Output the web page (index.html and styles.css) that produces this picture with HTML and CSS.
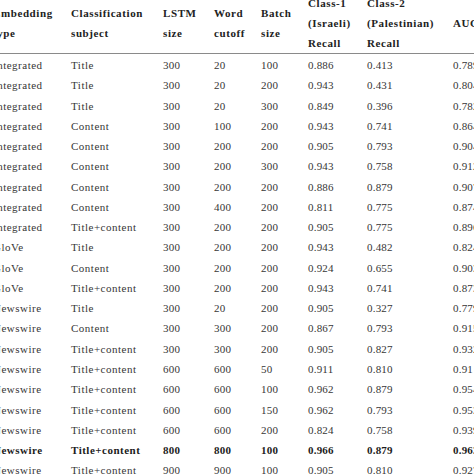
FILE: index.html
```html
<!DOCTYPE html>
<html>
<head>
<meta charset="utf-8">
<link rel="stylesheet" href="styles.css">
</head>
<body>
<div class="frame">
<table class="results">
<colgroup>
<col class="c-emb"><col class="c-subj"><col class="c-lstm"><col class="c-word"><col class="c-batch"><col class="c-r1"><col class="c-r2"><col class="c-auc">
</colgroup>
<thead>
<tr>
<th>Embedding<br>type</th>
<th>Classification<br>subject</th>
<th>LSTM<br>size</th>
<th>Word<br>cutoff</th>
<th>Batch<br>size</th>
<th>Class-1<br>(Israeli)<br>Recall</th>
<th>Class-2<br>(Palestinian)<br>Recall</th>
<th>AUC</th>
</tr>
</thead>
<tbody>
<tr><td>Integrated</td><td>Title</td><td class="n">300</td><td class="n">20</td><td class="n">100</td><td class="n">0.886</td><td class="n">0.413</td><td class="n">0.789</td></tr>
<tr><td>Integrated</td><td>Title</td><td class="n">300</td><td class="n">20</td><td class="n">200</td><td class="n">0.943</td><td class="n">0.431</td><td class="n">0.804</td></tr>
<tr><td>Integrated</td><td>Title</td><td class="n">300</td><td class="n">20</td><td class="n">300</td><td class="n">0.849</td><td class="n">0.396</td><td class="n">0.782</td></tr>
<tr><td>Integrated</td><td>Content</td><td class="n">300</td><td class="n">100</td><td class="n">200</td><td class="n">0.943</td><td class="n">0.741</td><td class="n">0.864</td></tr>
<tr><td>Integrated</td><td>Content</td><td class="n">300</td><td class="n">200</td><td class="n">200</td><td class="n">0.905</td><td class="n">0.793</td><td class="n">0.904</td></tr>
<tr><td>Integrated</td><td>Content</td><td class="n">300</td><td class="n">200</td><td class="n">300</td><td class="n">0.943</td><td class="n">0.758</td><td class="n">0.912</td></tr>
<tr><td>Integrated</td><td>Content</td><td class="n">300</td><td class="n">200</td><td class="n">200</td><td class="n">0.886</td><td class="n">0.879</td><td class="n">0.907</td></tr>
<tr><td>Integrated</td><td>Content</td><td class="n">300</td><td class="n">400</td><td class="n">200</td><td class="n">0.811</td><td class="n">0.775</td><td class="n">0.874</td></tr>
<tr><td>Integrated</td><td>Title+content</td><td class="n">300</td><td class="n">200</td><td class="n">200</td><td class="n">0.905</td><td class="n">0.775</td><td class="n">0.896</td></tr>
<tr><td>GloVe</td><td>Title</td><td class="n">300</td><td class="n">200</td><td class="n">200</td><td class="n">0.943</td><td class="n">0.482</td><td class="n">0.824</td></tr>
<tr><td>GloVe</td><td>Content</td><td class="n">300</td><td class="n">200</td><td class="n">200</td><td class="n">0.924</td><td class="n">0.655</td><td class="n">0.903</td></tr>
<tr><td>GloVe</td><td>Title+content</td><td class="n">300</td><td class="n">200</td><td class="n">200</td><td class="n">0.943</td><td class="n">0.741</td><td class="n">0.873</td></tr>
<tr><td>Newswire</td><td>Title</td><td class="n">300</td><td class="n">20</td><td class="n">200</td><td class="n">0.905</td><td class="n">0.327</td><td class="n">0.779</td></tr>
<tr><td>Newswire</td><td>Content</td><td class="n">300</td><td class="n">300</td><td class="n">200</td><td class="n">0.867</td><td class="n">0.793</td><td class="n">0.915</td></tr>
<tr><td>Newswire</td><td>Title+content</td><td class="n">300</td><td class="n">300</td><td class="n">200</td><td class="n">0.905</td><td class="n">0.827</td><td class="n">0.932</td></tr>
<tr><td>Newswire</td><td>Title+content</td><td class="n">600</td><td class="n">600</td><td class="n">50</td><td class="n">0.911</td><td class="n">0.810</td><td class="n">0.91</td></tr>
<tr><td>Newswire</td><td>Title+content</td><td class="n">600</td><td class="n">600</td><td class="n">100</td><td class="n">0.962</td><td class="n">0.879</td><td class="n">0.954</td></tr>
<tr><td>Newswire</td><td>Title+content</td><td class="n">600</td><td class="n">600</td><td class="n">150</td><td class="n">0.962</td><td class="n">0.793</td><td class="n">0.953</td></tr>
<tr><td>Newswire</td><td>Title+content</td><td class="n">600</td><td class="n">600</td><td class="n">200</td><td class="n">0.824</td><td class="n">0.758</td><td class="n">0.939</td></tr>
<tr class="best"><td>Newswire</td><td>Title+content</td><td class="n">800</td><td class="n">800</td><td class="n">100</td><td class="n">0.966</td><td class="n">0.879</td><td class="n">0.963</td></tr>
<tr><td>Newswire</td><td>Title+content</td><td class="n">900</td><td class="n">900</td><td class="n">100</td><td class="n">0.905</td><td class="n">0.810</td><td class="n">0.927</td></tr>
</tbody>
</table>
</div>
</body>
</html>
```

FILE: styles.css
```css
html, body {
  margin: 0;
  padding: 0;
  background: #ffffff;
}

.frame {
  width: 474px;
  height: 474px;
  overflow: hidden;
}

.results {
  border-collapse: collapse;
  table-layout: fixed;
  width: 520px;
  margin-left: -7px;
  margin-top: -7px;
  font-family: "Liberation Serif", "Times New Roman", serif;
  font-size: 11px;
  color: #363636;
}

.c-emb { width: 78px; }
.c-subj { width: 92px; }
.c-lstm { width: 51px; }
.c-word { width: 47px; }
.c-batch { width: 47px; }
.c-r1 { width: 59px; }
.c-r2 { width: 86px; }
.c-auc { width: 60px; }

.results th {
  font-weight: bold;
  color: #222222;
  text-align: left;
  vertical-align: middle;
  line-height: 20px;
  padding: 0;
  letter-spacing: 0.6px;
  white-space: nowrap;
  border-bottom: 1px solid #8a8a8a;
}

.results td {
  text-align: left;
  padding: 0;
  line-height: 20.27px;
  letter-spacing: 0.5px;
  white-space: nowrap;
}

.results td.n {
  letter-spacing: 0.2px;
}

.results tbody tr:first-child td {
  padding-top: 1px;
}

.results tr.best td {
  font-weight: bold;
  color: #1c1c1c;
}
```
